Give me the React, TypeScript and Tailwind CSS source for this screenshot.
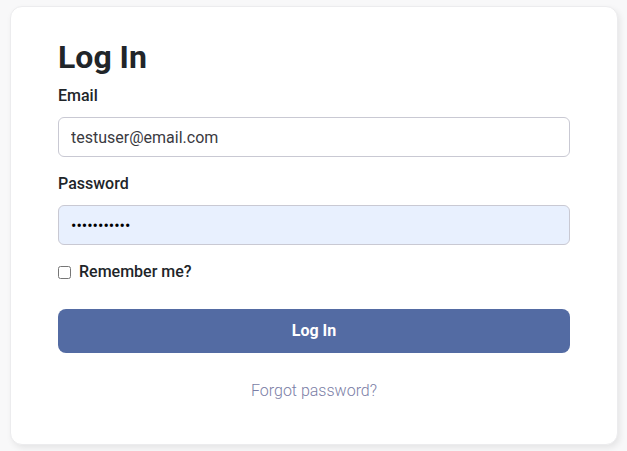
import React from "react";

export default function App() {
  return (
    <div className="min-h-[451px] w-full bg-[#f8f8f9] pt-[6px] pl-[10px]" style={{ fontFamily: "Roboto, 'Noto Sans', sans-serif" }}>
      <div className="w-[608px] h-[439px] rounded-[12px] border border-[#ececee] bg-white px-[47px] pt-[29px] shadow-[2px_3px_6px_rgba(0,0,0,0.08)]">
        <h1 className="text-[32px] leading-[43px] font-bold text-[#212529]">Log In</h1>
        <div className="mt-[5px] flex flex-col">
          <label className="text-[16px] leading-[24px] font-medium text-[#212529]">Email</label>
          <input
            type="email"
            defaultValue="testuser@email.com"
            className="mt-[9px] h-[40px] w-full rounded-[6px] border border-[#c9c9d3] bg-white px-[12px] text-[16px] text-[#3a3a3f] outline-none"
          />
          <label className="mt-[15px] text-[16px] leading-[24px] font-medium text-[#212529]">Password</label>
          <input
            type="password"
            defaultValue="password123"
            className="mt-[9px] h-[40px] w-full rounded-[6px] border border-[#c9c9d3] bg-[#e8f0fe] px-[12px] text-[16px] text-black outline-none"
          />
          <label className="mt-[15px] flex items-center gap-[8px] text-[16px] leading-[24px] font-medium text-[#212529]">
            <input type="checkbox" className="h-[13px] w-[13px]" />
            Remember me?
          </label>
          <button className="mt-[25px] h-[44px] w-full rounded-[8px] bg-[#536ba3] text-[16px] font-bold text-white">
            Log In
          </button>
          <a className="mt-[26px] text-center text-[16px] leading-[24px] font-light text-[#7b7ea6]">Forgot password?</a>
        </div>
      </div>
    </div>
  );
}
